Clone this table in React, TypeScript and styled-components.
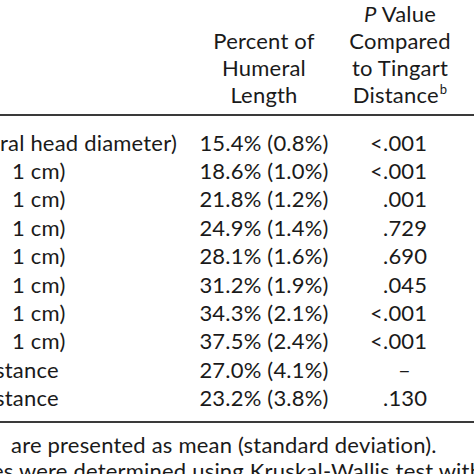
import styled, { createGlobalStyle } from "styled-components";

const rows = [
  { label: "ral head diameter)", indent: 0, pct: "15.4% (0.8%)", p: "<.001" },
  { label: "1 cm)", indent: 12, pct: "18.6% (1.0%)", p: "<.001" },
  { label: "1 cm)", indent: 12, pct: "21.8% (1.2%)", p: ".001" },
  { label: "1 cm)", indent: 12, pct: "24.9% (1.4%)", p: ".729" },
  { label: "1 cm)", indent: 12, pct: "28.1% (1.6%)", p: ".690" },
  { label: "1 cm)", indent: 12, pct: "31.2% (1.9%)", p: ".045" },
  { label: "1 cm)", indent: 12, pct: "34.3% (2.1%)", p: "<.001" },
  { label: "1 cm)", indent: 12, pct: "37.5% (2.4%)", p: "<.001" },
  { label: "stance", indent: -5, pct: "27.0% (4.1%)", p: "–" },
  { label: "stance", indent: -5, pct: "23.2% (3.8%)", p: ".130" },
];

function App() {
  return (
    <>
      <GlobalStyle />
      <Page>
        <Header>
          <HeadCell />
          <HeadCell>
            Percent of
            <br />
            Humeral
            <br />
            Length
          </HeadCell>
          <HeadCell>
            <i>P</i> Value
            <br />
            Compared
            <br />
            to Tingart
            <br />
            Distance<Sup>b</Sup>
          </HeadCell>
        </Header>

        <Body>
          {rows.map((r, i) => (
            <Row key={i}>
              <Label $indent={r.indent}>{r.label}</Label>
              <Pct>{r.pct}</Pct>
              {r.p === "–" ? (
                <Dash>–</Dash>
              ) : (
                <PValue>
                  <Prefix>{r.p.startsWith("<") ? "<" : ""}</Prefix>
                  {r.p.replace("<", "")}
                </PValue>
              )}
            </Row>
          ))}
        </Body>

        <Notes>
          <Note $indent={11}>are presented as mean (standard deviation).</Note>
          <Note $indent={-8}>es were determined using Kruskal-Wallis test with a post hoc</Note>
        </Notes>
      </Page>
    </>
  );
}

export default App;

const GlobalStyle = createGlobalStyle`
  body {
    margin: 0;
    background: #ffffff;
    overflow: hidden;
  }
`;

const Page = styled.div`
  width: 474px;
  height: 474px;
  overflow: hidden;
  background: #ffffff;
  color: #1a1a1a;
  font-family: "Lato", "Open Sans", sans-serif;
  font-size: 22px;
  letter-spacing: 0.2px;
`;

const Header = styled.div`
  display: grid;
  grid-template-columns: 196px 136px 136px;
  align-items: end;
  height: 116px;
  padding-bottom: 8px;
  box-sizing: border-box;
  border-bottom: 2px solid #3a3a3a;
`;

const HeadCell = styled.div`
  text-align: center;
  line-height: 27px;
  white-space: nowrap;
`;

const Sup = styled.sup`
  font-size: 13px;
  vertical-align: 9px;
  line-height: 0;
  margin-left: 1px;
`;

const Body = styled.div`
  padding: 12px 0 9px;
  border-bottom: 2px solid #3a3a3a;
`;

const Row = styled.div`
  display: grid;
  grid-template-columns: 196px 136px 136px;
  height: 28.4px;
  align-items: center;
  white-space: nowrap;
`;

const Label = styled.div<{ $indent: number }>`
  margin-left: ${(p) => p.$indent}px;
`;

const Pct = styled.div`
  text-align: center;
`;

const PValue = styled.div`
  padding-left: 35px;
`;

const Prefix = styled.span`
  display: inline-block;
  width: 16px;
  text-align: right;
`;

const Dash = styled.div`
  padding-left: 66px;
`;

const Notes = styled.div`
  padding-top: 9px;
  line-height: 26px;
  white-space: nowrap;
`;

const Note = styled.div<{ $indent: number }>`
  margin-left: ${(p) => p.$indent}px;
`;
